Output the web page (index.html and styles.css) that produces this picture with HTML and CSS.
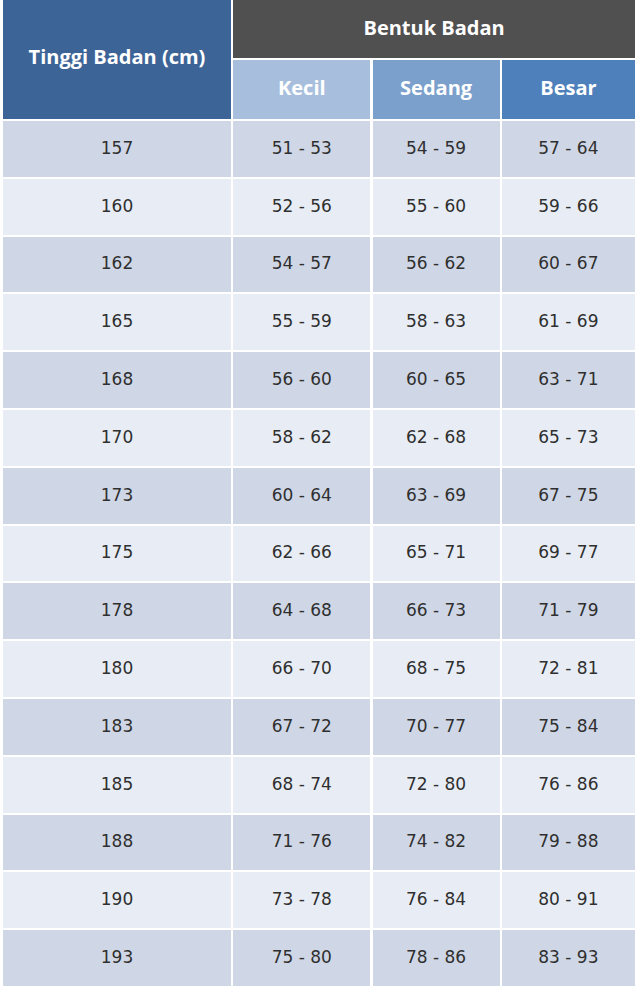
FILE: index.html
```html
<!DOCTYPE html>
<html lang="id">
<head>
<meta charset="utf-8">
<title>Tabel Berat Badan Ideal</title>
<link rel="stylesheet" href="styles.css">
</head>
<body>
<div class="chart">
  <div class="cell h-height">Tinggi Badan (cm)</div>
  <div class="cell h-shape">Bentuk Badan</div>
  <div class="cell h-small">Kecil</div>
  <div class="cell h-medium">Sedang</div>
  <div class="cell h-large">Besar</div>

  <div class="cell odd">157</div><div class="cell odd">51 - 53</div><div class="cell odd">54 - 59</div><div class="cell odd">57 - 64</div>
  <div class="cell even">160</div><div class="cell even">52 - 56</div><div class="cell even">55 - 60</div><div class="cell even">59 - 66</div>
  <div class="cell odd">162</div><div class="cell odd">54 - 57</div><div class="cell odd">56 - 62</div><div class="cell odd">60 - 67</div>
  <div class="cell even">165</div><div class="cell even">55 - 59</div><div class="cell even">58 - 63</div><div class="cell even">61 - 69</div>
  <div class="cell odd">168</div><div class="cell odd">56 - 60</div><div class="cell odd">60 - 65</div><div class="cell odd">63 - 71</div>
  <div class="cell even">170</div><div class="cell even">58 - 62</div><div class="cell even">62 - 68</div><div class="cell even">65 - 73</div>
  <div class="cell odd">173</div><div class="cell odd">60 - 64</div><div class="cell odd">63 - 69</div><div class="cell odd">67 - 75</div>
  <div class="cell even">175</div><div class="cell even">62 - 66</div><div class="cell even">65 - 71</div><div class="cell even">69 - 77</div>
  <div class="cell odd">178</div><div class="cell odd">64 - 68</div><div class="cell odd">66 - 73</div><div class="cell odd">71 - 79</div>
  <div class="cell even">180</div><div class="cell even">66 - 70</div><div class="cell even">68 - 75</div><div class="cell even">72 - 81</div>
  <div class="cell odd">183</div><div class="cell odd">67 - 72</div><div class="cell odd">70 - 77</div><div class="cell odd">75 - 84</div>
  <div class="cell even">185</div><div class="cell even">68 - 74</div><div class="cell even">72 - 80</div><div class="cell even">76 - 86</div>
  <div class="cell odd">188</div><div class="cell odd">71 - 76</div><div class="cell odd">74 - 82</div><div class="cell odd">79 - 88</div>
  <div class="cell even">190</div><div class="cell even">73 - 78</div><div class="cell even">76 - 84</div><div class="cell even">80 - 91</div>
  <div class="cell odd">193</div><div class="cell odd">75 - 80</div><div class="cell odd">78 - 86</div><div class="cell odd">83 - 93</div>
</div>
</body>
</html>
```

FILE: styles.css
```css
html, body {
  margin: 0;
  padding: 0;
  background: #ffffff;
}

.chart {
  display: grid;
  grid-template-columns: 228px 137px 127px 133px;
  grid-template-rows: 58px 59px repeat(15, 55.8px);
  column-gap: 2.3px;
  row-gap: 2px;
  padding-left: 3px;
}

.cell {
  display: flex;
  align-items: center;
  justify-content: center;
  font-family: "DejaVu Sans", Verdana, sans-serif;
  font-size: 17px;
  color: #2f2f2f;
  padding-bottom: 2px;
}

.h-height,
.h-shape,
.h-small,
.h-medium,
.h-large {
  font-family: "Open Sans", "Lato", sans-serif;
  font-weight: 700;
  font-size: 20px;
  color: #ffffff;
}

.h-height {
  grid-row: 1 / span 2;
  background: #3d6496;
  padding-bottom: 6px;
}

.h-shape {
  grid-column: 2 / span 3;
  background: #505050;
  padding-bottom: 4px;
}

.h-small { background: #a7bfdd; padding-bottom: 4px; }
.h-medium { background: #7ba0cc; padding-bottom: 4px; }
.h-large { background: #4e80bb; padding-bottom: 4px; }

.odd { background: #cfd7e6; }
.even { background: #e8edf5; }
```
